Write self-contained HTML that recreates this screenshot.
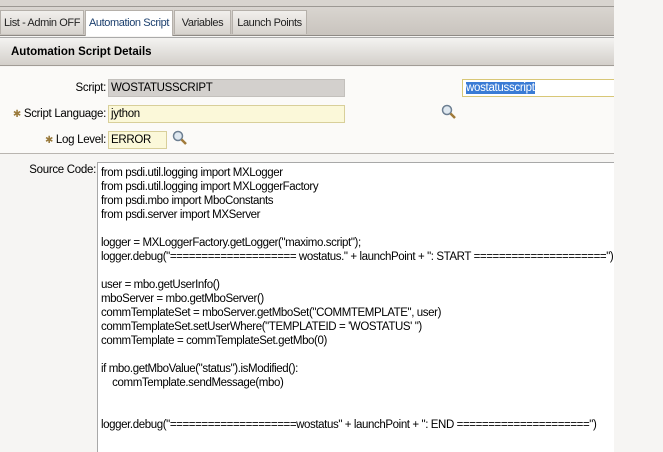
<!DOCTYPE html>
<html><head><style>
body{margin:0;width:663px;height:445px;overflow:hidden;background:#f6f5f3;font-family:"Liberation Sans",sans-serif;font-size:11px;color:#000;position:relative}
.a{position:absolute}
.tab{position:absolute;top:10px;height:24px;line-height:24px;text-align:center;font-size:11px;letter-spacing:-0.4px;white-space:nowrap;background:linear-gradient(#f1efec,#d7d3ce);border:1px solid #b5b0aa;border-bottom:none;box-sizing:border-box;color:#222}
.lbl{position:absolute;text-align:right;font-size:11.5px;letter-spacing:-0.3px;white-space:nowrap}
.fld{position:absolute;box-sizing:border-box;border:1px solid #d8cf9a;background:#fbf8d9;font-size:11.5px;line-height:16px;padding-left:2px;letter-spacing:-0.3px;white-space:nowrap;overflow:hidden}
.star{color:#9a7a3c;font-size:10px}
.code{position:absolute;left:97px;top:162px;width:517px;height:290px;border-left:1px solid #a8a8a8;border-top:1px solid #a8a8a8;background:#fff;box-sizing:border-box;padding:3px 0 0 3px;font-size:11.5px;line-height:14px;letter-spacing:-0.4px;white-space:pre}
</style></head><body>
<div class="a" style="left:0;top:0;width:614px;height:6px;background:#d8d4cf;border-bottom:1px solid #9c9893"></div>
<div class="a" style="left:0;top:7px;width:614px;height:28px;background:linear-gradient(#d9d5d0,#c9c4be);border-bottom:1px solid #8e8a85"></div>
<div class="tab" style="left:0;width:84px">List - Admin OFF</div>
<div class="tab" style="left:85px;width:88px;background:#fff;height:26px;color:#1b3f6e">Automation Script</div>
<div class="tab" style="left:174px;width:57px">Variables</div>
<div class="tab" style="left:232px;width:75px">Launch Points</div>
<div class="a" style="left:0;top:37px;width:614px;height:29px;background:linear-gradient(#f4f3f1,#d3cfca);border-top:1px solid #aaa;border-bottom:1px solid #a19c96;font-weight:bold;font-size:11.5px;line-height:29px;padding-left:11px;box-sizing:border-box">Automation Script Details</div>
<div class="a" style="left:0;top:67px;width:614px;height:86px;background:#fbfaf8;border-bottom:1px solid #b9b5b0"></div>
<div class="lbl" style="left:0;width:106px;top:82px">Script:</div>
<div class="fld" style="left:108px;top:79px;width:237px;height:18px;background:#d3d0cd;border-color:#c3c0bc">WOSTATUSSCRIPT</div>
<div class="fld" style="left:462px;top:79px;width:152px;height:18px;background:#fff;border-color:#d8c777;border-right:none;padding-left:3px"><span style="background:#3a7bd5;color:#fff">wostatusscript</span></div>
<div class="lbl" style="left:0;width:106px;top:108px"><span class="star">✱</span> Script Language:</div>
<div class="fld" style="left:108px;top:105px;width:237px;height:18px">jython</div>
<div class="lbl" style="left:0;width:106px;top:134px"><span class="star">✱</span> Log Level:</div>
<div class="fld" style="left:108px;top:131px;width:59px;height:18px">ERROR</div>
<svg class="a" style="left:441px;top:104px" width="16" height="16"><circle cx="6" cy="6" r="4.5" fill="#dfe8f0" stroke="#6d7f92" stroke-width="1.5"/><path d="M9.5 9.5l4.5 4.5" stroke="#a07a3a" stroke-width="2.5"/></svg>
<svg class="a" style="left:172px;top:130px" width="16" height="16"><circle cx="6" cy="6" r="4.5" fill="#dfe8f0" stroke="#6d7f92" stroke-width="1.5"/><path d="M9.5 9.5l4.5 4.5" stroke="#a07a3a" stroke-width="2.5"/></svg>
<div class="lbl" style="left:0;width:96px;top:164px">Source Code:</div>
<div class="code">from psdi.util.logging import MXLogger
from psdi.util.logging import MXLoggerFactory
from psdi.mbo import MboConstants
from psdi.server import MXServer

logger = MXLoggerFactory.getLogger("maximo.script");
logger.debug("==================== wostatus." + launchPoint + ": START =====================")

user = mbo.getUserInfo()
mboServer = mbo.getMboServer()
commTemplateSet = mboServer.getMboSet("COMMTEMPLATE", user)
commTemplateSet.setUserWhere("TEMPLATEID = 'WOSTATUS' ")
commTemplate = commTemplateSet.getMbo(0)

if mbo.getMboValue("status").isModified():
    commTemplate.sendMessage(mbo)


logger.debug("====================wostatus" + launchPoint + ": END =====================")</div>
</body></html>
